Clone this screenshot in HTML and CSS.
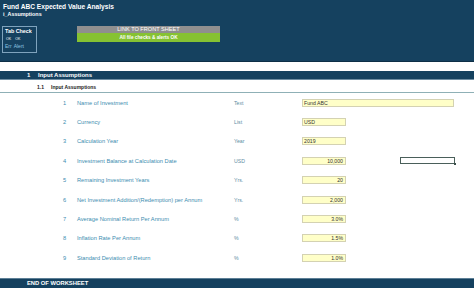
FILE: index.html
```html
<!DOCTYPE html>
<html>
<head>
<meta charset="utf-8">
<link rel="stylesheet" href="styles.css">
</head>
<body>
<div class="page">
  <header class="top">
    <div class="title">Fund ABC Expected Value Analysis</div>
    <div class="subtitle">i_Assumptions</div>
    <div class="controls">
      <div class="tabcheck">
        <div class="tc-title">Tab Check</div>
        <div class="tc-ok"><span>OK</span><span>OK</span></div>
        <div class="tc-err"><span>Err</span><span>Alert</span></div>
      </div>
      <div class="buttons">
        <div class="btn-link">LINK TO FRONT SHEET</div>
        <div class="btn-ok">All file checks &amp; alerts OK</div>
      </div>
    </div>
  </header>
  <div class="spacer"></div>
  <div class="section"><span class="sec-num">1</span><span class="sec-name">Input Assumptions</span></div>
  <div class="subsection"><span class="sub-num">1.1</span><span class="sub-name">Input Assumptions</span></div>
  <div class="rows">
    <div class="row"><span class="num">1</span><span class="label">Name of Investment</span><span class="unit">Text</span><span class="box long">Fund ABC</span></div>
    <div class="row"><span class="num">2</span><span class="label">Currency</span><span class="unit">List</span><span class="box">USD</span></div>
    <div class="row"><span class="num">3</span><span class="label">Calculation Year</span><span class="unit">Year</span><span class="box">2019</span></div>
    <div class="row"><span class="num">4</span><span class="label">Investment Balance at Calculation Date</span><span class="unit">USD</span><span class="box right">10,000</span><span class="selcell"></span></div>
    <div class="row"><span class="num">5</span><span class="label">Remaining Investment Years</span><span class="unit">Yrs.</span><span class="box right">20</span></div>
    <div class="row"><span class="num">6</span><span class="label">Net Investment Addition/(Redemption) per Annum</span><span class="unit">Yrs.</span><span class="box right">2,000</span></div>
    <div class="row"><span class="num">7</span><span class="label">Average Nominal Return Per Annum</span><span class="unit">%</span><span class="box right">3.0%</span></div>
    <div class="row"><span class="num">8</span><span class="label">Inflation Rate Per Annum</span><span class="unit">%</span><span class="box right">1.5%</span></div>
    <div class="row"><span class="num">9</span><span class="label">Standard Deviation of Return</span><span class="unit">%</span><span class="box right">1.0%</span></div>
  </div>
  <div class="endbar">END OF WORKSHEET</div>
</div>
</body>
</html>
```
FILE: styles.css
```css
html, body {
  margin: 0;
  padding: 0;
  background: #ffffff;
}
body {
  font-family: "Liberation Sans", Arial, sans-serif;
  width: 474px;
  height: 292px;
  overflow: hidden;
}
.page {
  width: 474px;
}
.top {
  height: 62px;
  background: #15415f;
  border-bottom: 1px solid #0e2f46;
  padding: 2px 0 0 3px;
  box-sizing: border-box;
  color: #ffffff;
}
.title {
  font-size: 6.6px;
  font-weight: bold;
  line-height: 9px;
}
.subtitle {
  font-size: 5.4px;
  font-weight: bold;
  line-height: 7px;
}
.controls {
  display: flex;
  align-items: flex-start;
  margin-top: 8px;
}
.tabcheck {
  width: 35px;
  height: 27px;
  box-sizing: border-box;
  border: 1px solid #7fa3bd;
  padding: 1px 1px 0 2px;
  margin-left: -1px;
}
.tc-title {
  font-size: 5.4px;
  font-weight: bold;
  line-height: 7px;
}
.tc-ok {
  font-size: 3.6px;
  line-height: 8px;
  display: flex;
  gap: 4px;
  padding-left: 1px;
}
.tc-err {
  font-size: 5px;
  line-height: 7px;
  color: #8ec3e0;
  display: flex;
  gap: 2px;
}
.buttons {
  margin-left: 40px;
  width: 143px;
}
.btn-link {
  background: #8f8f8f;
  height: 7px;
  font-size: 5.6px;
  line-height: 7px;
  text-align: center;
  color: #ffffff;
}
.btn-ok {
  background: #86c232;
  height: 9px;
  font-size: 4.7px;
  font-weight: bold;
  line-height: 9px;
  text-align: center;
  color: #ffffff;
}
.spacer {
  height: 9px;
}
.section {
  height: 8px;
  background: #15415f;
  color: #ffffff;
  font-size: 6px;
  font-weight: bold;
  line-height: 8px;
  display: flex;
  border-bottom: 1px solid #6f8ea3;
}
.sec-num {
  width: 11px;
  margin-left: 27px;
}
.subsection {
  height: 13px;
  box-sizing: border-box;
  padding-top: 4px;
  font-size: 5px;
  font-weight: bold;
  line-height: 7px;
  color: #1b1b1b;
  display: flex;
  border-bottom: 1px solid #8fb0b6;
}
.sub-num {
  width: 14px;
  margin-left: 37px;
}
.rows {
  display: grid;
  grid-auto-rows: 19.4px;
}
.row {
  display: grid;
  grid-template-columns: 63px 14px 157px 68px 98px 1fr;
  align-items: center;
  font-size: 5.7px;
  color: #3c8db0;
}
.num {
  grid-column: 2;
}
.label {
  grid-column: 3;
  white-space: nowrap;
}
.unit {
  grid-column: 4;
  color: #5d8da3;
  font-size: 5.2px;
}
.box {
  grid-column: 5;
  width: 44px;
  height: 8px;
  box-sizing: border-box;
  background: #ffffc8;
  border: 1px solid #d4d2b2;
  color: #333333;
  font-size: 5.2px;
  line-height: 6px;
  padding: 0 2px 0 1px;
  white-space: nowrap;
}
.box.long {
  width: 152px;
  grid-column: 5 / span 2;
}
.box.right {
  text-align: right;
}
.selcell {
  grid-column: 6;
  justify-self: start;
  width: 55px;
  height: 7px;
  box-sizing: border-box;
  border: 1px solid #4a5f5a;
  position: relative;
}
.selcell::after {
  content: "";
  position: absolute;
  right: -2px;
  bottom: -2px;
  width: 2px;
  height: 2px;
  background: #3a4f4a;
}
.endbar {
  margin-top: 10px;
  height: 9px;
  background: #15415f;
  border-top: 1px solid #5d7f96;
  color: #ffffff;
  font-size: 5.8px;
  font-weight: bold;
  line-height: 9px;
  padding-left: 27px;
}
```
